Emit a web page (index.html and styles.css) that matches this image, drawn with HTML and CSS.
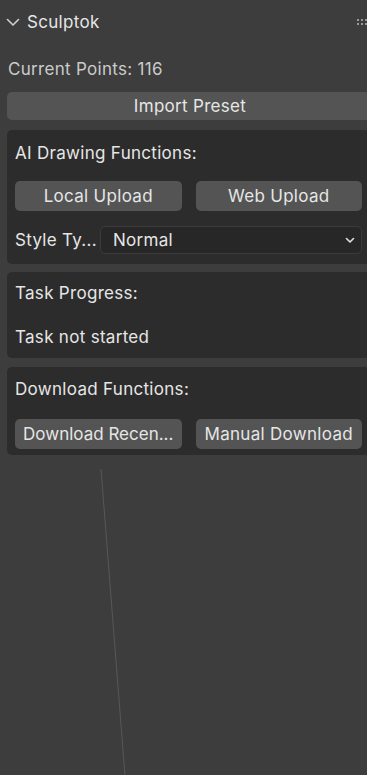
FILE: index.html
```html
<!DOCTYPE html>
<html lang="en">
<head>
    <meta charset="UTF-8">
    <meta name="viewport" content="width=device-width, initial-scale=1.0">
    <title>Sculptok</title>
    <link rel="stylesheet" href="styles.css">
</head>
<body>

<div class="header">
    <svg class="chevron" width="14" height="9" viewBox="0 0 14 9">
        <path d="M1.5 1.5 L7 7 L12.5 1.5" fill="none" stroke="#d0d0d0" stroke-width="1.6" stroke-linecap="round" stroke-linejoin="round"/>
    </svg>
    <span class="title">Sculptok</span>
    <svg class="grip" width="10" height="6" viewBox="0 0 10 6">
        <rect x="0" y="0" width="2" height="2" fill="#9a9a9a"/>
        <rect x="4" y="0" width="2" height="2" fill="#9a9a9a"/>
        <rect x="8" y="0" width="2" height="2" fill="#9a9a9a"/>
        <rect x="0" y="4" width="2" height="2" fill="#9a9a9a"/>
        <rect x="4" y="4" width="2" height="2" fill="#9a9a9a"/>
        <rect x="8" y="4" width="2" height="2" fill="#9a9a9a"/>
    </svg>
</div>

<div class="points">Current Points: 116</div>

<button class="wide-btn">Import Preset</button>

<div class="box box-ai">
    <div class="row-label">AI Drawing Functions:</div>
    <div class="btn-row">
        <button>Local Upload</button>
        <button>Web Upload</button>
    </div>
    <div class="style-row">
        <span class="style-label">Style Ty...</span>
        <div class="dropdown">
            <span>Normal</span>
            <svg width="10" height="7" viewBox="0 0 10 7">
                <path d="M1.5 1.5 L5 5 L8.5 1.5" fill="none" stroke="#e0e0e0" stroke-width="1.6" stroke-linecap="round" stroke-linejoin="round"/>
            </svg>
        </div>
    </div>
</div>

<div class="box box-task">
    <div class="row-label">Task Progress:</div>
    <div class="row-label status">Task not started</div>
</div>

<div class="box box-download">
    <div class="row-label">Download Functions:</div>
    <div class="btn-row">
        <button class="tight">Download Recen...</button>
        <button>Manual Download</button>
    </div>
</div>

<div class="empty">
    <svg width="367" height="321" viewBox="0 0 367 321">
        <line x1="101" y1="14" x2="125" y2="321" stroke="#575757" stroke-width="1"/>
    </svg>
</div>

</body>
</html>
```

FILE: styles.css
```css
html, body {
    width: 367px;
    height: 775px;
}
body {
    margin: 0;
    background: #3d3d3d;
    font-family: Inter, "Noto Sans", sans-serif;
    font-size: 17px;
    letter-spacing: 0.3px;
    color: #e6e6e6;
    overflow: hidden;
    display: flex;
    flex-direction: column;
}
body > * {
    flex-shrink: 0;
}
.header {
    display: flex;
    align-items: center;
    height: 28px;
    margin-top: 8px;
    padding-left: 6px;
}
.chevron {
    margin-right: 7px;
}
.title {
    flex: 1;
}
.points {
    height: 30px;
    line-height: 30px;
    margin-top: 18px;
    padding-left: 8px;
    color: #cbcbcb;
}
button {
    font-family: inherit;
    font-size: 17px;
    letter-spacing: 0.3px;
    color: #e6e6e6;
    background: #545454;
    border: none;
    border-radius: 5px;
    height: 29px;
    padding: 0;
    white-space: nowrap;
    cursor: pointer;
}
.wide-btn {
    margin: 8px 0 0 7px;
    width: 366px;
    height: 28px;
}
.box {
    background: #2c2c2c;
    border-radius: 5px;
    margin-left: 7px;
    width: 363px;
    padding: 0 8px;
    box-sizing: border-box;
}
.box-ai {
    margin-top: 10px;
    padding-top: 8px;
    padding-bottom: 10px;
}
.box-task {
    margin-top: 8px;
    padding-top: 6px;
    padding-bottom: 6px;
}
.box-download {
    margin-top: 9px;
    padding-top: 7px;
    padding-bottom: 6px;
}
.row-label {
    height: 30px;
    line-height: 30px;
    white-space: nowrap;
}
.status {
    margin-top: 14px;
}
.btn-row {
    display: flex;
    gap: 14px;
    margin-top: 13px;
}
.box-download .btn-row {
    margin-top: 15px;
}
.btn-row button {
    flex: 1;
    height: 30px;
}
.btn-row .tight {
    letter-spacing: 0;
}
.style-row {
    display: flex;
    align-items: center;
    margin-top: 15px;
}
.style-label {
    flex: 0 0 85px;
    white-space: nowrap;
}
.dropdown {
    flex: 1;
    height: 28px;
    box-sizing: border-box;
    background: #272727;
    border: 1px solid #3b3b3b;
    border-radius: 5px;
    display: flex;
    align-items: center;
    justify-content: space-between;
    padding: 0 6px 0 12px;
}
.empty {
    flex: 1;
}
.empty svg {
    display: block;
}
```
